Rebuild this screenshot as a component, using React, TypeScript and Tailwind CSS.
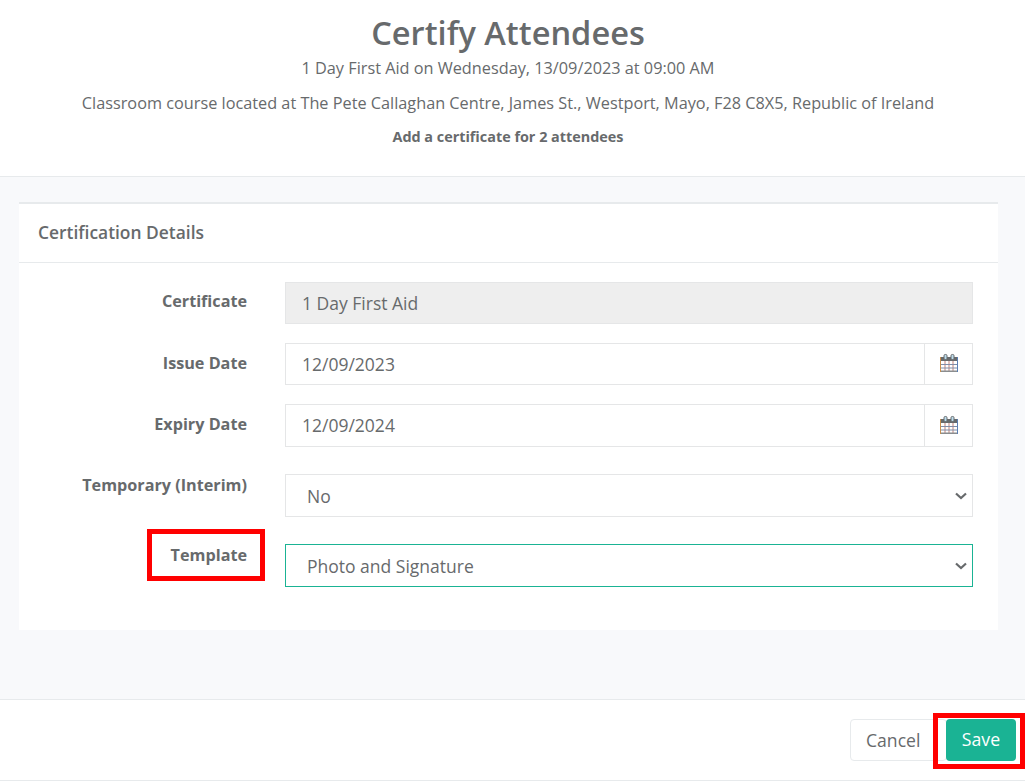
const CalendarIcon = () => (
  <svg width="18" height="20" viewBox="0 0 18 20" className="-mt-[2px] block">
    <rect x="1" y="4" width="16" height="15" fill="#ffffff" />
    <path d="M5 8v10M9 8v10M13 8v10" stroke="#c2827a" strokeWidth="1" />
    <path d="M1 11.5h16M1 15h16" stroke="#7f8da8" strokeWidth="1" />
    <rect x="1" y="4" width="16" height="4" fill="#676a6c" />
    <rect x="1" y="17.5" width="16" height="1.5" fill="#8a8d8f" />
    <rect x="4" y="1.5" width="3" height="5" rx="1.2" fill="#bcdcec" stroke="#676a6c" strokeWidth="1" />
    <rect x="11" y="1.5" width="3" height="5" rx="1.2" fill="#bcdcec" stroke="#676a6c" strokeWidth="1" />
    <path d="M0.5 4v15" stroke="#c98f4e" strokeWidth="1" />
    <path d="M17.5 4v15" stroke="#5b7fb5" strokeWidth="1" />
  </svg>
);

const Chevron = () => (
  <svg width="12" height="8" viewBox="0 0 12 8" className="block" fill="none">
    <path d="M1 1.5l5 4.5 5-4.5" stroke="#676a6c" strokeWidth="2.2" />
  </svg>
);

const Label = ({ text, className }: { text: string; className: string }) => (
  <div className={`w-[228px] shrink-0 text-right font-bold text-[16.2px] leading-[24px] ${className}`}>{text}</div>
);

const DateField = ({ value, height }: { value: string; height: string }) => (
  <div className={`flex flex-1 border border-[#e5e6e7] ${height}`}>
    <div className="flex flex-1 items-center pl-[16px] text-[17.5px]">{value}</div>
    <div className="flex w-[48px] items-center justify-center border-l border-[#e5e6e7]">
      <CalendarIcon />
    </div>
  </div>
);

const SelectField = ({ value, active }: { value: string; active?: boolean }) => (
  <div className={`flex h-[43px] flex-1 items-center justify-between border pl-[21px] pr-[5px] text-[17.5px] ${active ? "border-[#1ab394]" : "border-[#e5e6e7]"}`}>
    <span className="pt-[1px]">{value}</span>
    <Chevron />
  </div>
);

export default function App() {
  return (
    <div className="relative flex h-[783px] flex-col overflow-hidden bg-white font-['Open_Sans',sans-serif] text-[#676a6c]">
      <header className="h-[177px] shrink-0 border-b border-[#e7eaec] pr-[9px] pt-[11px] text-center">
        <h1 className="text-[32.6px] font-semibold leading-[43px]">Certify Attendees</h1>
        <p className="mt-[2px] text-[16.27px] leading-[24px]">1 Day First Aid on Wednesday, 13/09/2023 at 09:00 AM</p>
        <p className="mt-[11px] text-[16.27px] leading-[24px]">
          Classroom course located at The Pete Callaghan Centre, James St., Westport, Mayo, F28 C8X5, Republic of Ireland
        </p>
        <p className="mt-[10px] text-[14.4px] font-bold leading-[24px]">Add a certificate for 2 attendees</p>
      </header>

      <main className="h-[522px] shrink-0 bg-[#f8f9fb] pl-[19px] pr-[27px] pt-[25px]">
        <section className="h-[428px] border-t-2 border-[#e7eaec] bg-white">
          <div className="flex h-[59px] items-center border-b border-[#e7eaec] pb-[2px] pl-[19px] text-[17.4px] font-semibold">
            Certification Details
          </div>
          <div className="flex flex-col pr-[25px] pt-[19px]">
            <div className="flex gap-[38px]">
              <Label text="Certificate" className="pt-[7px]" />
              <div className="flex h-[42px] flex-1 items-center border border-[#e5e6e7] bg-[#eeeeee] pl-[16px] text-[17.5px]">
                1 Day First Aid
              </div>
            </div>
            <div className="mt-[19px] flex gap-[38px]">
              <Label text="Issue Date" className="pt-[8px]" />
              <DateField value="12/09/2023" height="h-[42px]" />
            </div>
            <div className="mt-[19px] flex gap-[38px]">
              <Label text="Expiry Date" className="pt-[8px]" />
              <DateField value="12/09/2024" height="h-[43px]" />
            </div>
            <div className="mt-[27px] flex gap-[38px]">
              <Label text="Temporary (Interim)" className="-mt-[1px]" />
              <SelectField value="No" />
            </div>
            <div className="mt-[27px] flex gap-[38px]">
              <Label text="Template" className="-mt-[1px]" />
              <SelectField value="Photo and Signature" active />
            </div>
          </div>
        </section>
      </main>

      <footer className="flex h-[82px] shrink-0 justify-end border-y border-[#e7eaec] pr-[9px] pt-[19px]">
        <button className="h-[42px] w-[97px] rounded-[4px] border border-[#e7eaec] bg-white pl-[15px] text-left text-[17.6px]">
          Cancel
        </button>
        <button className="ml-[-1px] h-[42px] w-[70px] rounded-[4px] bg-[#1ab394] pb-[1px] text-[17.7px] font-medium text-white">
          Save
        </button>
      </footer>

      <div className="absolute left-[147px] top-[529px] h-[52px] w-[118px] border-[5px] border-[#ff0000]" />
      <div className="absolute left-[933px] top-[713px] h-[56px] w-[92px] border-[5px] border-[#ff0000]" />
    </div>
  );
}
